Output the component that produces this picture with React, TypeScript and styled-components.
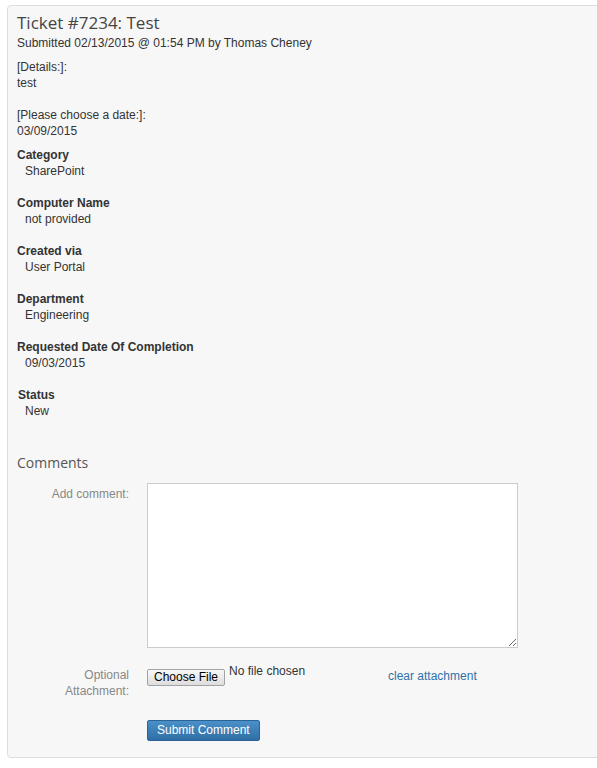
import React from 'react';
import styled, { createGlobalStyle } from 'styled-components';

const GlobalStyle = createGlobalStyle`
  html, body {
    margin: 0;
    padding: 0;
    overflow-x: hidden;
    background: #ffffff;
  }
  body {
    font-family: "Liberation Sans", Arial, sans-serif;
    font-size: 12px;
    color: #333;
  }
`;

const Panel = styled.div`
  margin: 5px -20px 0 7px;
  padding: 5px 30px 16px 9px;
  background-color: #f7f7f7;
  border: 1px solid #dddddd;
  border-radius: 4px;
`;

const Title = styled.h3`
  margin: 0;
  font-family: "Open Sans", sans-serif;
  font-size: 17px;
  font-weight: 400;
  line-height: 24px;
  color: #444;
`;

const Submitted = styled.div`
  line-height: 16px;
`;

const Details = styled.div`
  margin-top: 8px;
  line-height: 16px;
`;

const Spacer = styled.div`
  height: 16px;
`;

const FieldList = styled.div`
  margin-top: 8px;
  display: flex;
  flex-direction: column;
  gap: 16px;
`;

const Field = styled.div`
  line-height: 16px;
`;

const FieldLabel = styled.div<{ $nudge?: number }>`
  font-weight: bold;
  padding-left: ${(p) => p.$nudge ?? 0}px;
`;

const FieldValue = styled.div`
  padding-left: 8px;
`;

const SectionTitle = styled.h4`
  margin: 34px 0 0;
  font-family: "Open Sans", sans-serif;
  font-size: 14px;
  font-weight: 400;
  line-height: 20px;
  color: #555;
`;

const FormRow = styled.div<{ $top: number }>`
  display: grid;
  grid-template-columns: 112px 371px;
  column-gap: 18px;
  margin-top: ${(p) => p.$top}px;
`;

const RowLabel = styled.label<{ $pad: number }>`
  text-align: right;
  color: #888;
  padding-top: ${(p) => p.$pad}px;
  line-height: 16px;
`;

const CommentBox = styled.textarea`
  box-sizing: border-box;
  display: block;
  width: 371px;
  height: 165px;
  margin: 0;
  border: 1px solid #cccccc;
  border-radius: 0;
  background: #ffffff;
  font-family: "Liberation Sans", Arial, sans-serif;
  font-size: 12px;
  resize: both;
`;

const AttachmentCell = styled.div`
  display: flex;
  align-items: flex-start;
`;

const FilePicker = styled.div`
  display: flex;
  align-items: flex-start;
  gap: 4px;
  width: 241px;
`;

const ChooseButton = styled.button`
  margin-top: 6px;
  height: 17px;
  padding: 0 6px;
  border: 1px solid #a3a3a3;
  border-radius: 2px;
  background: linear-gradient(#f8f8f8, #dddddd);
  font-family: "Liberation Sans", Arial, sans-serif;
  font-size: 12px;
  line-height: 15px;
  color: #000;
`;

const NoFile = styled.span`
  line-height: 16px;
  color: #333;
`;

const ClearLink = styled.a`
  margin-top: 5px;
  line-height: 16px;
  color: #3071a9;
  text-decoration: none;
`;

const SubmitButton = styled.button`
  justify-self: start;
  height: 21px;
  padding: 0 9px;
  border: 1px solid #2a6496;
  border-radius: 2px;
  background: linear-gradient(#4b90c8, #2f6fa6);
  font-family: "Liberation Sans", Arial, sans-serif;
  font-size: 12px;
  line-height: 19px;
  color: #ffffff;
`;

const fields = [
  { label: 'Category', value: 'SharePoint' },
  { label: 'Computer Name', value: 'not provided' },
  { label: 'Created via', value: 'User Portal' },
  { label: 'Department', value: 'Engineering' },
  { label: 'Requested Date Of Completion', value: '09/03/2015' },
  { label: 'Status', value: 'New', nudge: 1 },
];

const App = () => {
  return (
    <>
      <GlobalStyle />
      <Panel>
        <Title>Ticket #7234: Test</Title>
        <Submitted>Submitted 02/13/2015 @ 01:54 PM by Thomas Cheney</Submitted>
        <Details>
          <div>[Details:]:</div>
          <div>test</div>
          <Spacer />
          <div>[Please choose a date:]:</div>
          <div>03/09/2015</div>
        </Details>
        <FieldList>
          {fields.map((f) => (
            <Field key={f.label}>
              <FieldLabel $nudge={f.nudge}>{f.label}</FieldLabel>
              <FieldValue>{f.value}</FieldValue>
            </Field>
          ))}
        </FieldList>

        <SectionTitle>Comments</SectionTitle>
        <FormRow $top={10}>
          <RowLabel $pad={3}>Add comment:</RowLabel>
          <CommentBox />
        </FormRow>
        <FormRow $top={15}>
          <RowLabel $pad={4}>
            Optional
            <br />
            Attachment:
          </RowLabel>
          <AttachmentCell>
            <FilePicker>
              <ChooseButton type="button">Choose File</ChooseButton>
              <NoFile>No file chosen</NoFile>
            </FilePicker>
            <ClearLink href="#">clear attachment</ClearLink>
          </AttachmentCell>
        </FormRow>
        <FormRow $top={21}>
          <span />
          <SubmitButton type="button">Submit Comment</SubmitButton>
        </FormRow>
      </Panel>
    </>
  );
};

export default App;
